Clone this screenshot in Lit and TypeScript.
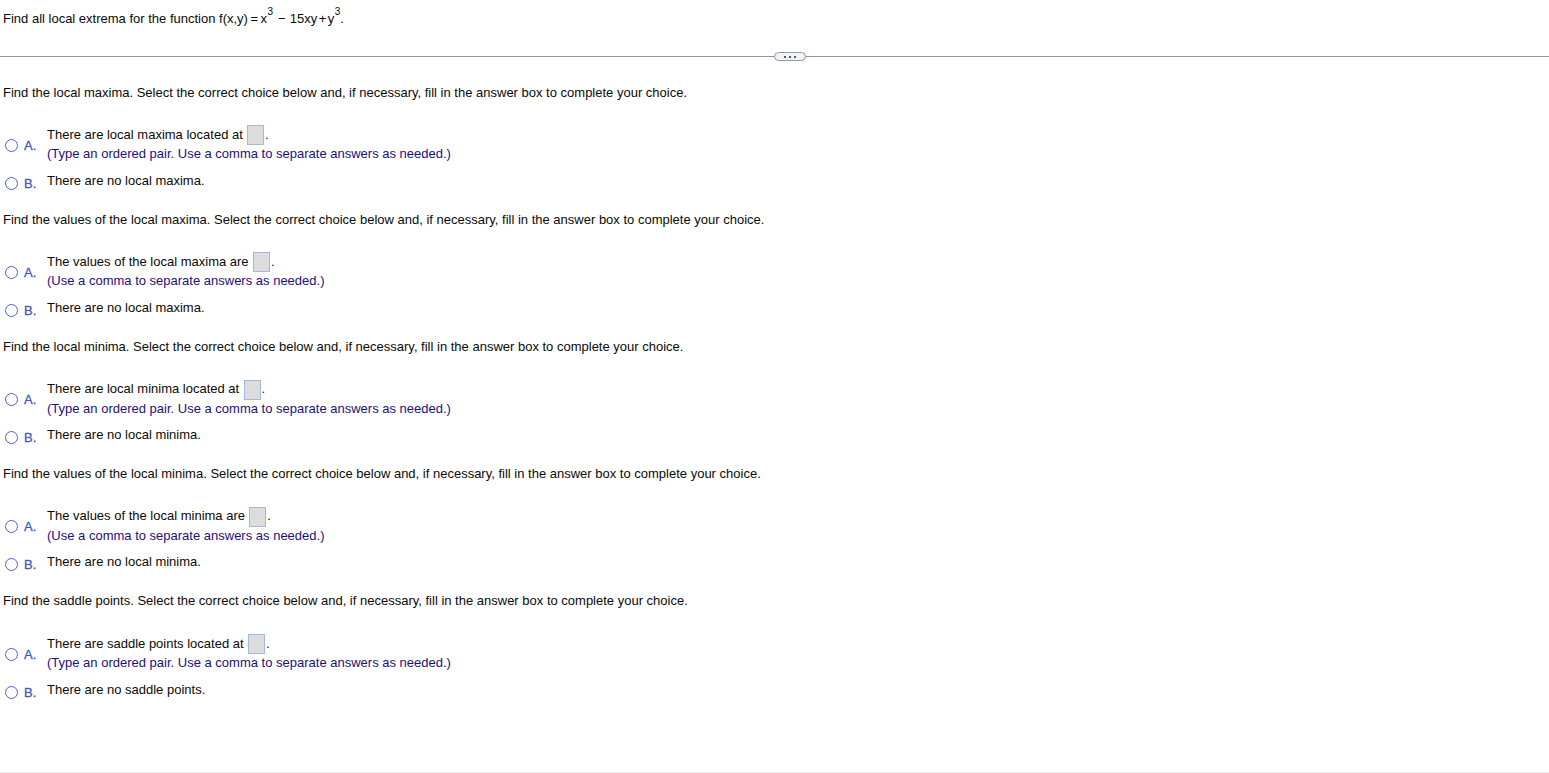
import { LitElement, css, html } from "lit";
import { customElement } from "lit/decorators.js";

type Part = {
  prompt: string;
  lead: string;
  hint: string;
  none: string;
};

const parts: Part[] = [
  {
    prompt:
      "Find the local maxima. Select the correct choice below and, if necessary, fill in the answer box to complete your choice.",
    lead: "There are local maxima located at",
    hint: "(Type an ordered pair. Use a comma to separate answers as needed.)",
    none: "There are no local maxima.",
  },
  {
    prompt:
      "Find the values of the local maxima. Select the correct choice below and, if necessary, fill in the answer box to complete your choice.",
    lead: "The values of the local maxima are",
    hint: "(Use a comma to separate answers as needed.)",
    none: "There are no local maxima.",
  },
  {
    prompt:
      "Find the local minima. Select the correct choice below and, if necessary, fill in the answer box to complete your choice.",
    lead: "There are local minima located at",
    hint: "(Type an ordered pair. Use a comma to separate answers as needed.)",
    none: "There are no local minima.",
  },
  {
    prompt:
      "Find the values of the local minima. Select the correct choice below and, if necessary, fill in the answer box to complete your choice.",
    lead: "The values of the local minima are",
    hint: "(Use a comma to separate answers as needed.)",
    none: "There are no local minima.",
  },
  {
    prompt:
      "Find the saddle points. Select the correct choice below and, if necessary, fill in the answer box to complete your choice.",
    lead: "There are saddle points located at",
    hint: "(Type an ordered pair. Use a comma to separate answers as needed.)",
    none: "There are no saddle points.",
  },
];

@customElement("app-root")
export class AppRoot extends LitElement {
  renderPart(part: Part) {
    return html`
      <section class="part">
        <div class="prompt">${part.prompt}</div>
        <div class="choice choice--a">
          <span class="radio"></span>
          <span class="letter">A.</span>
          <div class="body">
            <div class="lead">${part.lead}<span class="box"></span>.</div>
            <div class="hint">${part.hint}</div>
          </div>
        </div>
        <div class="choice choice--b">
          <span class="radio"></span>
          <span class="letter">B.</span>
          <div class="body">${part.none}</div>
        </div>
      </section>
    `;
  }

  render() {
    return html`
      <div class="page">
        <div class="question">
          Find all local extrema for the function
          f(x,y)<span class="op">=</span>x<sup>3</sup><span class="op op--minus">−</span>15xy<span class="op op--plus">+</span>y<sup>3</sup>.
        </div>
        <div class="divider">
          <span class="more"><i></i><i></i><i></i></span>
        </div>
        <div class="parts">${parts.map((p) => this.renderPart(p))}</div>
        <div class="footer"></div>
      </div>
    `;
  }

  static styles = css`
    :host {
      display: block;
      font-family: "Liberation Sans", Arial, sans-serif;
      font-size: 13px;
      color: #0a0a0a;
    }

    .page {
      height: 773px;
      display: flex;
      flex-direction: column;
      background: #fff;
      overflow: hidden;
    }

    .question {
      height: 36px;
      padding: 11px 0 0 3px;
      box-sizing: border-box;
      line-height: 15px;
      white-space: nowrap;
    }

    .op {
      margin: 0 2.5px;
    }

    .op--minus {
      margin: 0 4px 0 5px;
    }

    .op--plus {
      margin: 0 1.5px;
    }

    sup {
      font-size: 10px;
      line-height: 0;
      vertical-align: 8px;
      margin-left: 0.5px;
    }

    .divider {
      position: relative;
      margin-top: 20px;
      height: 1px;
      background: #8e95a5;
    }

    .more {
      position: absolute;
      left: 774px;
      top: -4px;
      width: 32px;
      height: 9px;
      box-sizing: border-box;
      display: flex;
      justify-content: center;
      align-items: center;
      gap: 3px;
      background: #f1f3f7;
      border: 1px solid #8e95a5;
      border-radius: 5px;
    }

    .more i {
      width: 2px;
      height: 2px;
      background: #50586b;
    }

    .parts {
      flex: 1;
      display: flex;
      flex-direction: column;
      padding-top: 27.6px;
    }

    .part {
      height: 127.2px;
      padding-left: 3px;
    }

    .prompt {
      line-height: 15px;
      white-space: nowrap;
    }

    .choice {
      display: flex;
      align-items: flex-start;
      padding-left: 2px;
    }

    .choice--a {
      margin-top: 24.7px;
    }

    .choice--b {
      margin-top: 10.5px;
    }

    .radio {
      flex: none;
      width: 13px;
      height: 13px;
      box-sizing: border-box;
      border: 1.5px solid #4d62c4;
      border-radius: 50%;
      background: #fff;
    }

    .letter {
      margin-left: 6px;
      width: 23px;
      line-height: 15px;
      color: #4058bd;
      -webkit-text-stroke: 0.3px #4058bd;
    }

    .choice--a .radio {
      margin-top: 14.5px;
    }

    .choice--a .letter {
      margin-top: 13.5px;
    }

    .choice--b .radio {
      margin-top: 4px;
    }

    .choice--b .letter {
      margin-top: 3px;
    }

    .body {
      line-height: 15px;
      white-space: nowrap;
    }

    .lead {
      display: flex;
      align-items: center;
      height: 20px;
    }

    .box {
      width: 17px;
      height: 20px;
      box-sizing: border-box;
      margin: 2px 1px 0 4.3px;
      background: #dcdcdc;
      border: 1px solid #a3b8e0;
    }

    .hint {
      margin-top: 2px;
      color: #1c0f7c;
      line-height: 16px;
    }

    .footer {
      height: 1px;
      background: #ececec;
    }
  `;
}

declare global {
  interface HTMLElementTagNameMap {
    "app-root": AppRoot;
  }
}
